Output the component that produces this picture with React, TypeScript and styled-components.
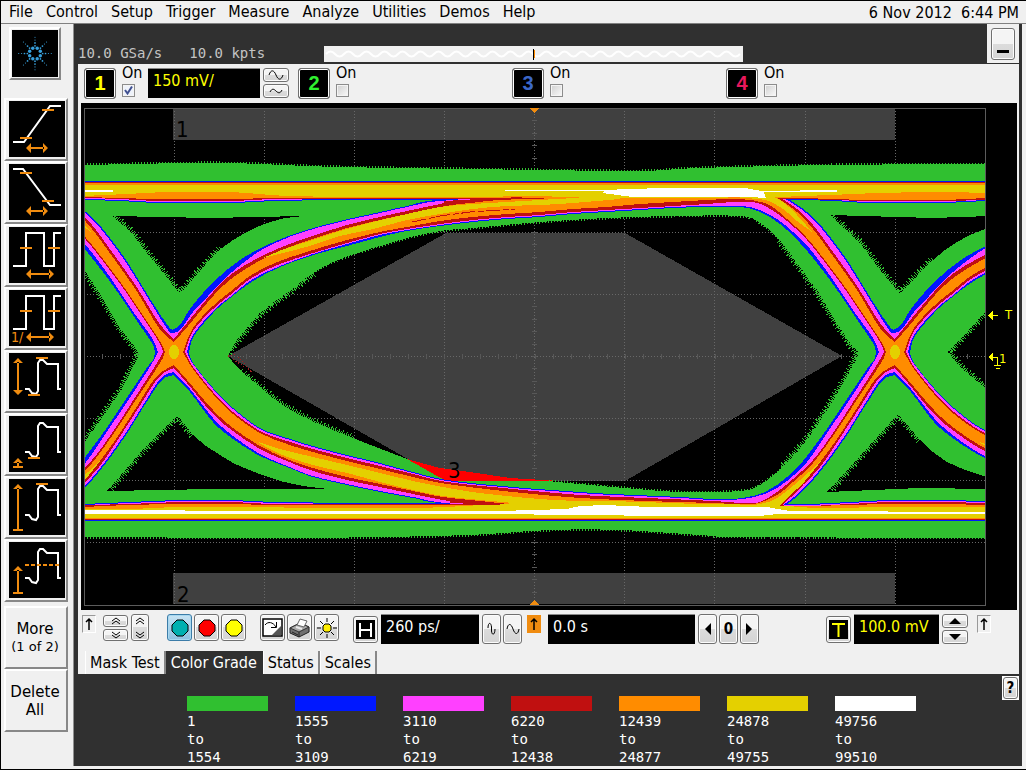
import React from "react";
import styled, { createGlobalStyle, css } from "styled-components";

const ui = `"DejaVu Sans Condensed", "Noto Sans", sans-serif`;
const mono = `"DejaVu Sans Mono", "Liberation Mono", monospace`;

const color = {
  face: "#f0f0f0",
  dark: "#303030",
  edge: "#707070",
  green: "#30c030",
  blue: "#0018ff",
  magenta: "#ff40ff",
  red: "#c01010",
  orange: "#ff8c00",
  yellow: "#e4d000",
  white: "#ffffff",
  mask: "#404040",
  accent: "#f08c10",
};

const GlobalStyle = createGlobalStyle`
  *, *::before, *::after { box-sizing: border-box; }
  body { margin: 0; background: ${color.face}; font-family: ${ui}; font-size: 16px; color: #000; }
  button, input { font: inherit; color: inherit; margin: 0; }
`;

/* ---------- frame ---------- */

const Shell = styled.div`
  min-height: 100vh;
  display: flex;
  flex-direction: column;
  background: ${color.face};
  border: solid #000;
  border-width: 1px 0 1px 1px;
`;

const MenuBar = styled.header`
  display: flex;
  align-items: center;
  justify-content: space-between;
  height: 23px;
  padding: 0 7px 0 8px;
  border-bottom: 1px solid #808080;
  white-space: pre;
`;

const MenuList = styled.nav`
  display: flex;
  gap: 13px;
`;

const MenuItem = styled.button`
  border: 0;
  padding: 0;
  background: none;
  line-height: 22px;
`;

const Body = styled.div`
  flex: 1;
  display: flex;
  align-items: stretch;
  padding-right: 4px;
  padding-bottom: 3px;
`;

const Sidebar = styled.aside`
  width: 73px;
  flex: none;
  display: flex;
  flex-direction: column;
  padding-left: 3px;
  border-right: 1px solid #909090;
`;

const Main = styled.main`
  flex: 1;
  min-width: 0;
  background: ${color.dark};
  padding: 0 3px 0 4px;
`;

/* ---------- side bar ---------- */

const raised = css`
  border: 2px solid;
  border-color: #fff #888 #888 #fff;
  background: ${color.face};
`;

const LogoButton = styled.button`
  ${raised}
  width: 52px;
  height: 53px;
  padding: 1px;
  margin: 3px 0 18px 5px;
  svg { display: block; width: 100%; height: 100%; background: #000; }
`;

const MeasureButton = styled.button`
  ${raised}
  width: 64px;
  height: 63px;
  padding: 0 1px 2px 3px;
  svg { display: block; width: 56px; height: 56px; background: #000; }
`;

const TextButton = styled.button`
  ${raised}
  width: 64px;
  height: 63px;
  padding: 0 2px 0 0;
  font-family: "DejaVu Sans", sans-serif;
  font-size: 15px;
  line-height: 18px;
  small { font-size: 13px; display: block; }
`;

const SideGap = styled.div`
  height: 4px;
`;

/* ---------- header ---------- */

const StatusBar = styled.div`
  display: flex;
  align-items: flex-end;
  height: 40px;
`;

const Rates = styled.div`
  display: flex;
  width: 246px;
  gap: 27px;
  padding-bottom: 2px;
  color: #c4c4c4;
  font-family: ${mono};
  font-size: 14px;
  line-height: 18px;
  white-space: nowrap;
`;

const MemoryBar = styled.div`
  width: 419px;
  height: 16px;
  margin-bottom: 2px;
  background: ${color.face};
  svg { display: block; width: 100%; height: 100%; }
`;

const MinimizeBox = styled.div`
  margin-left: auto;
  width: 32px;
  height: 39px;
  padding: 4px;
  align-self: flex-start;
  background: ${color.face};
`;

const Panel = styled.section`
  background: ${color.face};
`;

/* ---------- controls ---------- */

const Key = styled.button<{ $w: number; $h: number; $on?: boolean }>`
  display: flex;
  align-items: center;
  justify-content: center;
  flex: none;
  width: ${(p) => p.$w}px;
  height: ${(p) => p.$h}px;
  padding: 0;
  border: 1px solid ${(p) => (p.$on ? "#3c7ca8" : color.edge)};
  border-radius: 3px;
  box-shadow: inset 0 0 0 1px ${(p) => (p.$on ? "#a8d8f0" : "#fcfcfc")};
  background: ${(p) =>
    p.$on
      ? "linear-gradient(#c8e4f4, #8cc0e0)"
      : "linear-gradient(#f4f4f4 50%, #dcdcdc 50%, #d4d4d4)"};
  font-size: 15px;
  font-weight: bold;
  svg { display: block; }
`;

const Field = styled.input<{ $w: number; $ink: string }>`
  flex: none;
  width: ${(p) => p.$w}px;
  height: 30px;
  border: 0;
  border-top: 1px solid #888;
  padding: 0 4px 6px 5px;
  background: #000;
  color: ${(p) => p.$ink};
  font-size: 16px;
`;

const Group = styled.div<{ $gap?: number; $before?: number }>`
  display: flex;
  align-items: center;
  gap: ${(p) => p.$gap ?? 2}px;
  margin-left: ${(p) => p.$before ?? 0}px;
`;

const Stack = styled.div`
  display: flex;
  flex-direction: column;
  gap: 2px;
`;

const ArrowTag = styled.button<{ $lit?: boolean; $before?: number }>`
  width: 14px;
  height: 18px;
  padding: 0;
  align-self: flex-start;
  margin-top: 1px;
  margin-left: ${(p) => p.$before ?? 0}px;
  border: ${(p) => (p.$lit ? "0" : "1px solid #999")};
  border-right-color: #fff;
  border-bottom-color: #fff;
  background: ${(p) => (p.$lit ? color.accent : color.face)};
  svg { display: block; margin: auto; }
`;

const Spacer = styled.div`
  flex: 1;
`;

/* ---------- channels ---------- */

const ChannelRow = styled.div`
  display: grid;
  grid-template-columns: repeat(4, minmax(0, 214px));
  height: 39px;
  padding: 4px 6px 0;
`;

const Channel = styled.div`
  display: flex;
  align-items: flex-start;
`;

const ChannelKey = styled.button<{ $ink: string }>`
  width: 32px;
  height: 31px;
  padding: 0;
  border: 1px solid ${color.edge};
  border-radius: 3px;
  box-shadow: inset 0 0 0 1px #fff;
  background: #000;
  color: ${(p) => p.$ink};
  font: bold 20px "Liberation Sans", sans-serif;
`;

const OnSwitch = styled.label`
  display: flex;
  flex-direction: column;
  width: 26px;
  margin-left: 6px;
  margin-top: -4px;
  line-height: 18px;
`;

const Tick = styled.input`
  appearance: none;
  width: 13px;
  height: 13px;
  margin-top: 2px;
  border: 1px solid #8c8c8c;
  box-shadow: inset 0 0 0 1px #f4f4f4;
  background: linear-gradient(135deg, #cfcfcf, #fafafa);
  &:checked {
    background: #eef2fa
      url("data:image/svg+xml,%3Csvg xmlns='http://www.w3.org/2000/svg' viewBox='0 0 11 11'%3E%3Cpath d='M2 5l2.500 3.500L9 1.500' fill='none' stroke='%23405090' stroke-width='2'/%3E%3C/svg%3E");
  }
`;

/* ---------- lower part ---------- */

const PlotFrame = styled.div`
  padding: 0 2px 0 3px;
  svg { display: block; width: 100%; height: auto; background: #000; }
`;

const Toolbar = styled.div`
  display: flex;
  align-items: flex-start;
  height: 41px;
  padding: 4px 28px 0 4px;
`;

const TabList = styled.div`
  display: flex;
  height: 23px;
  padding-left: 7px;
`;

const Tab = styled.button<{ $active?: boolean }>`
  height: 23px;
  padding: 0 4px;
  border: 0;
  border-right: 2px solid ${(p) => (p.$active ? color.dark : "#888")};
  border-left: 1px solid ${(p) => (p.$active ? color.dark : "#fff")};
  background: ${(p) => (p.$active ? color.dark : color.face)};
  color: ${(p) => (p.$active ? "#fff" : "#000")};
  line-height: 22px;
  white-space: nowrap;
`;

const Legend = styled.section`
  display: flex;
  gap: 27px;
  padding: 22px 0 0 109px;
  height: 92px;
`;

const LegendItem = styled.div`
  width: 81px;
  color: #fff;
  font-family: ${mono};
  font-size: 14px;
  line-height: 18px;
`;

const Swatch = styled.div<{ $c: string }>`
  height: 15px;
  margin-bottom: 1px;
  background: ${(p) => p.$c};
`;

const HelpBox = styled.div`
  margin: -20px 0 0 auto;
  height: 24px;
  padding: 1px;
  background: #fff;
`;

/* ---------- eye diagram ---------- */

type Pt = [number, number];

/* Turns "x,y x,y ..." into points. */
const pts = (s: string): Pt[] =>
  s.trim().split(/\s+/).map((p) => p.split(",").map(Number) as Pt);

/* Smooth curve through the points, without the initial move. */
const curve = (p: Pt[]) => {
  let d = "";
  for (let i = 0; i < p.length - 1; i++) {
    const a = p[Math.max(0, i - 1)];
    const b = p[i];
    const c = p[i + 1];
    const e = p[Math.min(p.length - 1, i + 2)];
    d += `C${b[0] + (c[0] - a[0]) / 6} ${b[1] + (c[1] - a[1]) / 6} ${c[0] - (e[0] - b[0]) / 6} ${c[1] - (e[1] - b[1]) / 6} ${c[0]} ${c[1]}`;
  }
  return d;
};

const open = (s: string) => {
  const p = pts(s);
  return `M${p[0]}${curve(p)}`;
};

const straight = (s: string) => `M${pts(s).join("L")}`;

/* Band closed through the two crossing points at its ends. */
const band = (first: string, second: string, ends = true) => {
  const a = pts(first);
  const b = pts(second).reverse();
  return ends
    ? `M174 352L${a[0]}${curve(a)}L895 352L${b[0]}${curve(b)}Z`
    : `M${a[0]}${curve(a)}L${b[0]}${curve(b)}Z`;
};

const PERIOD = 721;

interface Level {
  fill: string;
  periodic: string[];
  rails: string[];
}

const levels: Level[] = [
  {
    fill: color.blue,
    periodic: [
      band(
        "174,329 180,325 190,309 203,293 220,276 240,260 267,245 300,232 340,221 380,212 407,206 437,200 520,197 700,196 775,195 788,199 807,212 823,228 847,260 873,302 890,327 895,329",
        "189,352 194,336 213,313 230,298 253,281 280,267 313,255 347,246 380,237 407,231 440,226 473,222 507,219 540,217 573,214 607,212 640,210 673,208 707,207 740,207 760,212 780,224 800,243 817,263 840,294 860,324 873,343 876,352"
      ),
      band(
        "189,352 193,363 213,388 233,408 260,428 287,438 313,446 347,455 380,463 413,472 447,480 513,487 580,492 613,494 680,497 713,499 743,498 767,491 787,477 803,461 827,429 847,399 867,369 874,360 876,352",
        "174,376 190,392 213,422 233,439 260,456 287,467 313,477 347,485 380,492 413,498 440,503 520,508 700,508 770,508 787,504 807,487 827,463 847,435 867,403 883,380 895,375"
      ),
    ],
    rails: [
      band("84,181 985,181", "84,200 120,201 160,203 230,203 280,201 380,200 760,200 830,201 870,203 940,203 985,201", false),
      band("84,504 130,502 180,500 230,500 280,502 400,503 720,503 800,504 850,502 890,500 940,500 985,501", "84,521 985,521", false),
    ],
  },
  {
    fill: color.magenta,
    periodic: [
      band(
        "174,333 181,329 193,312 208,296 224,279 247,260 267,247 300,233 340,222 380,213 407,207 440,201 520,197 700,196 775,196 787,200 806,213 822,229 846,261 872,303 889,330 895,333",
        "187,352 193,335 213,311 230,297 253,279 280,266 313,254 347,244 380,235 407,230 440,225 473,221 507,218 540,216 573,213 607,211 640,209 673,207 707,206 740,206 757,209 777,219 793,232 810,249 833,280 853,310 873,338 879,352"
      ),
      band(
        "187,352 193,364 213,389 233,409 260,429 287,439 313,447 347,456 380,464 413,473 447,481 513,488 580,493 613,495 680,498 713,500 743,499 767,493 787,481 807,462 827,433 850,399 872,365 879,352",
        "174,372 190,389 213,418 233,436 260,454 287,466 313,476 347,484 380,491 413,497 445,503 520,508 700,508 770,508 786,503 806,486 826,462 846,434 866,402 882,378 895,372"
      ),
    ],
    rails: [
      band("84,182 985,182", "84,199 120,200 160,202 230,202 280,200 380,199 760,199 830,200 870,202 940,202 985,200", false),
      band("84,505 130,503 180,501 230,501 280,503 400,504 720,504 800,505 850,503 890,501 940,501 985,502", "84,520 985,520", false),
    ],
  },
  {
    fill: color.red,
    periodic: [
      band(
        "174,339 187,323 213,292 233,273 260,257 287,245 313,236 347,225 380,217 407,211 440,204 455,201 520,197 700,196 770,196 780,198 797,209 813,225 833,252 857,286 880,323 895,339",
        "185,352 193,331 213,309 230,295 253,277 280,264 313,253 347,243 380,234 407,229 440,224 473,220 507,217 540,215 573,212 607,210 640,208 673,206 707,204 733,202 753,202 767,207 787,221 807,240 827,265 847,292 867,322 880,342 884,352"
      ),
      band(
        "185,352 193,367 213,392 233,412 260,431 287,441 313,449 347,458 380,466 413,474 447,482 513,489 580,495 647,498 713,501 743,503 760,502 777,492 793,479 813,460 833,433 857,396 878,363 884,352",
        "174,368 187,383 213,414 233,431 260,449 287,461 313,471 347,480 380,487 413,494 443,500 470,504 520,508 770,508 783,504 803,485 820,467 840,438 860,407 880,377 895,368"
      ),
    ],
    rails: [
      band("84,182 985,182", "84,198 120,199 160,201 230,201 280,199 380,199 760,199 830,200 870,201 940,201 985,200", false),
      band("84,505 130,504 180,502 230,502 280,504 400,504 720,504 800,506 850,504 890,502 940,502 985,503", "84,520 985,520", false),
    ],
  },
  {
    fill: color.orange,
    periodic: [
      band(
        "174,342 188,326 214,295 235,276 261,260 287,248 313,239 347,228 380,220 407,214 440,207 470,203 525,199 700,196 768,196 777,198 797,212 813,229 833,256 857,290 880,328 895,342",
        "183,352 193,328 213,306 230,292 253,274 280,261 313,250 347,240 380,232 407,227 440,221 473,217 507,214 540,212 573,209 607,207 640,204 673,202 707,200 740,199 767,204 787,219 807,238 827,263 847,290 867,320 882,343 886,352"
      ),
      band(
        "183,352 193,369 213,394 233,414 260,433 287,444 313,452 347,461 380,469 413,477 447,484 513,492 580,498 647,501 713,503 753,504 777,495 793,482 813,463 835,433 858,398 881,363 886,352",
        "174,365 187,380 213,410 233,428 260,446 287,459 313,468 347,477 380,484 413,491 443,497 480,501 510,504 560,507 768,508 780,504 800,484 817,466 837,439 857,408 877,377 895,365"
      ),
    ],
    rails: [
      band("84,183 985,183", "84,197 120,198 160,199 230,199 280,198 380,198 760,198 830,199 870,200 940,200 985,198", false),
      band("84,507 130,505 180,504 230,504 280,505 400,505 720,505 800,506 850,505 890,504 940,504 985,505", "84,519 985,519", false),
    ],
  },
  {
    fill: color.yellow,
    periodic: [
      band(
        "263,258 287,248 313,240 340,231 373,222 407,214 440,207 473,204 507,202 540,200 573,198 620,194",
        "263,258 287,252 313,245 340,236 373,229 407,220 440,214 473,209 507,206 540,205 573,203 620,199",
        false
      ),
      band("740,194 765,194 783,202 797,215 812,232", "740,198 765,200 783,209 797,221 812,232", false),
      band(
        "256,441 280,449 313,457 347,465 380,473 413,481 443,487 480,493 540,499 600,502",
        "256,441 280,454 313,465 347,473 380,482 413,490 443,496 480,500 540,505 600,508",
        false
      ),
      band("740,506 760,504 777,498 800,480 821,461", "740,510 775,507 786,499 805,481 821,461", false),
    ],
    rails: [
      band("84,185 985,185", "84,196 127,194 170,192 230,192 290,196 380,197 480,197 530,196 600,198 660,198 770,197 830,195 880,193 940,192 985,193", false),
      band("84,509 130,509 180,507 250,507 320,508 420,508 520,503 600,501 700,504 770,505 820,508 890,507 985,507", "84,518 985,518", false),
    ],
  },
  {
    fill: color.white,
    periodic: [],
    rails: [
      "M84 190H113V192H84Z",
      "M505 190L600 190L633 189L660 188H745L762 191L837 190V192H764L766 198L750 197H633L602 193L605 191H505Z",
      "M84 510H130L240 511H460L500 511L567 509L580 506L605 505L650 507H767L778 509L790 511L985 512V514H790L778 514L760 516H647L600 515L567 515L500 514H84Z",
    ],
  },
];

const centreHole =
  "228,356 237,340 260,313 287,293 313,273 333,262 357,253 380,246 407,238 440,231 473,228 540,222 607,218 673,216 740,216 760,223 780,240 800,267 817,290 833,317 850,343 858,354 847,377 827,410 807,440 783,467 760,485 740,491 680,492 613,487 547,481";

const sideHoles = [
  "112,216 130,231 150,257 165,275 180,294 200,271 210,259 222,248 233,240 245,233 257,227 270,222 285,218 303,216 210,218 112,216",
  "78,260 84,269 105,302 120,328 137,350 139,355 136,361 122,389 104,415 84,443 78,450",
  "177,415 193,435 206,446 220,455 233,463 247,469 262,475 280,481 303,486 328,489 213,489 107,491 140,453 177,415",
  "830,215 860,243 880,270 900,294 917,276 925,267 933,260 945,250 957,242 970,235 990,227 990,216 933,218 830,215",
  "990,307 967,332 948,352 960,367 990,392",
  "898,414 920,440 933,452 947,462 965,470 990,478 990,489 920,488 827,492 860,456 898,414",
];

/* The central opening follows the mask edge where the trace crosses the mask. */
const maskSide = "L446 481L407 459";
const centreReturn = "407,459 353,438 310,420 280,403 260,387 240,370 228,356";
const outerTop = "84,165 220,163 340,167 540,170 640,171 700,168 830,165 985,164";
const outerBottom = "84,537 280,538 380,537 470,535 550,530 620,530 700,535 745,537 985,538";

const greenArea = [
  band(outerTop, outerBottom, false),
  `${open(centreHole)}${maskSide}${curve(pts(centreReturn))}Z`,
  ...sideHoles.map((h) => `${straight(h)}Z`),
].join("");

const flatFuzz = [outerTop, outerBottom, centreHole].map(open).join("");

/* Steep flanks scatter further than the flat parts. */
const flankFuzz = [
  "114,217 130,231 150,257 165,275 180,294 200,271 222,248",
  "84,269 105,302 120,328 137,350 139,355 136,361 122,389 104,415 84,443",
  "193,435 177,415 140,453 110,488",
  "832,217 860,243 880,270 900,294 917,276 933,260",
  "985,312 967,332 948,352 960,367 985,388",
  "920,440 898,414 860,456 830,490",
  "780,240 800,267 817,290 833,317 850,343 858,354 847,377 827,410 807,440 783,467",
  "228,352 237,340 260,313 287,293 313,273",
  "240,372 260,388 280,404 310,421 353,439",
].map(straight).join("");

const columns = [174, 264, 354, 444, 534, 624, 714, 805, 895];
const rows = [170, 232, 294, 356, 418, 480, 542];

const ticks = (() => {
  let d = "";
  for (let i = 1; i < 50; i++) d += `M${84 + Math.round(i * 18.02)} 354v5`;
  for (let i = 1; i < 40; i++) d += `M532 ${108 + Math.round(i * 12.4)}h5`;
  return d;
})();

const EyeDiagram = () => (
  <svg viewBox="81 103 936 507" role="img" aria-label="Eye diagram with colour grade and mask" shapeRendering="crispEdges">
    <defs>
      <clipPath id="grid-area">
        <rect x="84" y="108" width="901" height="496" />
      </clipPath>
    </defs>
    <g fill={color.mask}>
      <rect x="173" y="108" width="722" height="32" />
      <rect x="173" y="573" width="722" height="31" />
      <path d="M228 356L446 233H625L842 356L625 481H446Z" />
    </g>
    <g stroke="#686868" strokeDasharray="1 2" fill="none">
      {columns.map((x) => <path key={x} d={`M${x}.5 108V604`} />)}
      {rows.map((y) => <path key={y} d={`M84 ${y}.5H985`} />)}
    </g>
    <path d={ticks} stroke="#585858" fill="none" />
    <path d="M407 459L440 468L470 472L510 478L560 481H446Z" fill="#ff0000" />
    <g clipPath="url(#grid-area)">
      <g fill="none" stroke={color.green}>
        <path d={flatFuzz} strokeWidth="3" strokeDasharray="1 2" />
        <path d={flankFuzz} strokeWidth="5" strokeDasharray="1 1" />
        <path d={flankFuzz} strokeWidth="9" strokeDasharray="1 3" />
      </g>
      <path d={greenArea} fill={color.green} fillRule="evenodd" />
      {levels.map((level) => (
        <g key={level.fill} fill={level.fill}>
          {level.rails.map((d, i) => <path key={i} d={d} />)}
          {[-PERIOD, 0, PERIOD].map((shift) => (
            <g key={shift} transform={`translate(${shift} 0)`}>
              {level.periodic.map((d, i) => <path key={i} d={d} />)}
            </g>
          ))}
        </g>
      ))}
      <ellipse cx="174" cy="352" rx="5" ry="7" fill={color.yellow} />
      <ellipse cx="895" cy="352" rx="5" ry="7" fill={color.yellow} />
      <path d="M412 222L440 216L470 212L515 209" stroke={color.red} strokeDasharray="14 3 6 2" fill="none" />
      <path d="M444 202L480 200L522 198" stroke={color.red} strokeWidth="2" fill="none" />
      <path d="M450 502L500 504" stroke={color.red} strokeWidth="2" fill="none" />
    </g>
    <path d="M228 356L236 354L252 372Z" fill="none" stroke="#a02020" strokeDasharray="1 2" />
    <rect x="84" y="108" width="901" height="497" fill="none" stroke="#5c5c5c" />
    <path d="M529 108H540L534.500 113ZM529 605H540L534.500 600Z" fill={color.accent} />
    <g fontFamily="DejaVu Sans Condensed, sans-serif" fontSize="22" fill="#000">
      <text x="176" y="137">1</text>
      <text x="177" y="602">2</text>
      <text x="448" y="478">3</text>
    </g>
    <path d="M988 315.500L993 311V320ZM988 357L993 352V362Z" fill="#ffff00" />
    <path d="M993 315.500H998M993 357.500H997.500V365M994 365.500H1001M996 368.500H1000" fill="none" stroke="#ffff00" />
    <g fontFamily="DejaVu Sans Condensed, sans-serif" fontSize="13" fill="#ffff00">
      <text x="1005" y="319">T</text>
      <text x="999" y="363">1</text>
    </g>
  </svg>
);

/* ---------- icons ---------- */

const Logo = () => {
  const dots: React.ReactNode[] = [];
  for (let k = 0; k < 8; k++) {
    const a = (k * Math.PI) / 4;
    const b = a + Math.PI / 8;
    dots.push(<circle key={`r${k}`} cx={24 + 6 * Math.cos(b)} cy={24 + 6 * Math.sin(b)} r="1.8" />);
    for (let r = 8; r <= 17; r += 3)
      dots.push(<circle key={`${k}-${r}`} cx={24 + r * Math.cos(a)} cy={24 + r * Math.sin(a)} r={r > 12 ? 0.6 : 0.9} />);
  }
  return <svg viewBox="0 0 48 48" fill="#38a0dc" aria-hidden>{dots}</svg>;
};

const hArrow = (x1: number, x2: number, y: number) =>
  `M${x1} ${y}l5 -5v10zM${x2} ${y}l-5 -5v10zM${x1 + 4} ${y - 1}H${x2 - 4}v2H${x1 + 4}z`;
const upArrow = (y1: number, y2: number) =>
  `M9 ${y1}l-5 5h10zM8 ${y1 + 4}h2V${y2}h-2zM4 ${y2 - 1}h10v2h-10z`;

const pulse = "M4 39H17V6H35V39H45V6H52";
const overshoot = "M16 36H20L23 40L27 41L29 38V10L31 7H34L38 11H49V36H52";

interface MeasureIcon {
  name: string;
  trace: string;
  marks: string;
  arrow: string;
  dash?: boolean;
  label?: string;
}

const measures: MeasureIcon[] = [
  { name: "Rise time", trace: "M4 41H15L41 5H52", marks: "M11 37H23M33 9H45", arrow: hArrow(17, 39, 47) },
  { name: "Fall time", trace: "M4 5H14L41 41H52", marks: "M11 9H23M33 37H45", arrow: hArrow(17, 39, 47) },
  { name: "Period", trace: pulse, marks: "M11 21H23M39 21H51", arrow: hArrow(17, 45, 47) },
  { name: "Frequency", trace: pulse, marks: "M11 21H23M39 21H51", arrow: hArrow(17, 45, 47), label: "1/" },
  { name: "V p-p", trace: overshoot, marks: "M27 5H39M19 42H31", arrow: "M9 5l-5 5h10zM8 9h2v29h-2zM9 42l-5 -5h10z" },
  { name: "V min", trace: overshoot, marks: "M19 42H31", arrow: upArrow(42, 51) },
  { name: "V max", trace: overshoot, marks: "M27 5H39", arrow: upArrow(5, 51) },
  { name: "V avg", trace: overshoot, marks: "M16 23H50", dash: true, arrow: upArrow(24, 51) },
];

const MeasureGlyph = ({ m }: { m: MeasureIcon }) => (
  <svg viewBox="0 0 56 56" aria-hidden>
    <path d={m.trace} fill="none" stroke="#fff" strokeWidth="2" />
    <path d={m.marks} stroke={color.accent} strokeWidth="2" strokeDasharray={m.dash ? "4 2" : undefined} />
    <path d={m.arrow} fill={color.accent} />
    {m.label && (
      <text x="2" y="52" fontSize="14" fontFamily="DejaVu Sans Condensed, sans-serif" fill={color.accent}>{m.label}</text>
    )}
  </svg>
);

const Line = ({ w, h, d, sw = 1 }: { w: number; h: number; d: string; sw?: number }) => (
  <svg width={w} height={h} viewBox={`0 0 ${w} ${h}`} fill="none" stroke="#000" strokeWidth={sw} aria-hidden>
    <path d={d} />
  </svg>
);
const Solid = ({ w, h, d }: { w: number; h: number; d: string }) => (
  <svg width={w} height={h} viewBox={`0 0 ${w} ${h}`} aria-hidden><path d={d} /></svg>
);

const chevUp = "M1 4L5 1L9 4M1 7L5 4L9 7";
const chevDown = "M1 1L5 4L9 1M1 4L5 7L9 4";
const ArrowUp = () => <Line w={10} h={14} sw={1.5} d="M5 13V2M2 5L5 2L8 5" />;

const Octagon = ({ c }: { c: string }) => (
  <svg width="18" height="18" viewBox="0 0 18 18" aria-hidden>
    <path d="M6 1H12L17 6V12L12 17H6L1 12V6Z" fill={c} stroke="#000" />
  </svg>
);

const Letter = ({ d, ink }: { d: string; ink: string }) => (
  <svg width="19" height="19" viewBox="0 0 19 19" aria-hidden>
    <rect width="19" height="19" />
    <path d={d} stroke={ink} strokeWidth="2" fill="none" />
  </svg>
);

const ClearGlyph = () => (
  <svg width="21" height="19" viewBox="0 0 21 19" aria-hidden>
    <rect x="1" y="1" width="19" height="17" fill="#fff" stroke="#000" strokeWidth="1.5" />
    <path d="M19 8V17H10Z" fill="#555" />
    <path d="M3 7C6 3 11 4 14 9M14.500 4V9.500H9" fill="none" stroke="#000" />
  </svg>
);

const PrinterGlyph = () => (
  <svg width="21" height="20" viewBox="0 0 21 20" aria-hidden>
    <path d="M1 10L11 5L20 9V14L10 19L1 15Z" fill="#707070" stroke="#222" />
    <path d="M1 10L10 14L20 9L11 5Z" fill="#a8a8a8" stroke="#333" />
    <path d="M10 14V19M3 14L9 17" stroke="#222" />
    <path d="M8 7L11 1L18 3L15 9Z" fill="#fff" stroke="#666" />
    <path d="M7 9L13 11" stroke="#e8e8e8" strokeWidth="2" />
  </svg>
);

const SunGlyph = () => (
  <svg width="20" height="20" viewBox="0 0 20 20" aria-hidden>
    <path d="M10 0V4M10 16V20M0 10H4M16 10H20M3 3L6 6M14 14L17 17M17 3L14 6M3 17L6 14" stroke="#000" />
    <path d="M8 6H12L14 8V12L12 14H8L6 12V8Z" fill="#ffee00" stroke="#000" />
  </svg>
);

const memoryWave = (() => {
  let d = "M2 8";
  for (let x = 2; x < 400; x += 18) d += "q4.500 -5 9 0t9 0";
  return d;
})();

/* ---------- page ---------- */

const menus = ["File", "Control", "Setup", "Trigger", "Measure", "Analyze", "Utilities", "Demos", "Help"];

const channels = [
  { n: "1", ink: "#ffff00", on: true },
  { n: "2", ink: "#30f030", on: false },
  { n: "3", ink: "#3c68c8", on: false },
  { n: "4", ink: "#e8185c", on: false },
];

const grades = [
  { c: color.green, from: "1", to: "1554" },
  { c: color.blue, from: "1555", to: "3109" },
  { c: color.magenta, from: "3110", to: "6219" },
  { c: color.red, from: "6220", to: "12438" },
  { c: color.orange, from: "12439", to: "24877" },
  { c: color.yellow, from: "24878", to: "49755" },
  { c: color.white, from: "49756", to: "99510" },
];

const App = () => (
  <>
    <GlobalStyle />
    <Shell>
      <MenuBar>
        <MenuList>
          {menus.map((m) => <MenuItem key={m}>{m}</MenuItem>)}
        </MenuList>
        <time>{"6 Nov 2012  6:44 PM"}</time>
      </MenuBar>
      <Body>
        <Sidebar>
          <LogoButton aria-label="About"><Logo /></LogoButton>
          {measures.map((m) => (
            <MeasureButton key={m.name} aria-label={m.name}><MeasureGlyph m={m} /></MeasureButton>
          ))}
          <SideGap />
          <TextButton>More<small>(1 of 2)</small></TextButton>
          <TextButton>Delete<br />All</TextButton>
        </Sidebar>
        <Main>
          <StatusBar>
            <Rates><span>10.0 GSa/s</span><span>10.0 kpts</span></Rates>
            <MemoryBar>
              <svg viewBox="0 0 419 16" preserveAspectRatio="none" aria-hidden>
                <path d={memoryWave} fill="none" stroke="#fff" strokeWidth="2" />
                <path d="M209.500 3V14" stroke="#000" />
                <path d="M210.500 4V12" stroke={color.orange} />
              </svg>
            </MemoryBar>
            <MinimizeBox>
              <Key $w={24} $h={32} aria-label="Minimize"><Solid w={12} h={22} d="M0 17h12v3H0z" /></Key>
            </MinimizeBox>
          </StatusBar>
          <Panel>
            <ChannelRow>
              {channels.map((ch) => (
                <Channel key={ch.n}>
                  <ChannelKey $ink={ch.ink}>{ch.n}</ChannelKey>
                  <OnSwitch>On<Tick type="checkbox" defaultChecked={ch.on} /></OnSwitch>
                  {ch.on && (
                    <>
                      <Field $w={112} $ink="#ffff00" defaultValue="150 mV/" aria-label="Vertical scale" />
                      <Group $before={3}>
                        <Stack>
                          <Key $w={26} $h={14} aria-label="Larger"><Line w={16} h={10} d="M1 5C3 -1 6 0 8 5S13 11 15 5" /></Key>
                          <Key $w={26} $h={14} aria-label="Smaller"><Line w={14} h={6} d="M1 4C3 0 5 1 7 3S11 6 13 2" /></Key>
                        </Stack>
                      </Group>
                    </>
                  )}
                </Channel>
              ))}
            </ChannelRow>
            <PlotFrame><EyeDiagram /></PlotFrame>
            <Toolbar>
              <ArrowTag aria-label="Raise"><ArrowUp /></ArrowTag>
              <Group $before={7} $gap={3}>
                <Stack>
                  <Key $w={25} $h={12} aria-label="Up"><Line w={10} h={8} d={chevUp} /></Key>
                  <Key $w={25} $h={12} aria-label="Down"><Line w={10} h={8} d={chevDown} /></Key>
                </Stack>
                <Key $w={18} $h={27} aria-label="Offset"><Line w={10} h={22} d={`${chevUp}M1 15L5 18L9 15M1 18L5 21L9 18`} /></Key>
              </Group>
              <Group $before={18}>
                <Key $w={25} $h={27} $on aria-label="Run"><Octagon c="#00b0b0" /></Key>
                <Key $w={25} $h={27} aria-label="Stop"><Octagon c="#ff0000" /></Key>
                <Key $w={25} $h={27} aria-label="Single"><Octagon c="#ffff00" /></Key>
              </Group>
              <Group $before={14}>
                <Key $w={25} $h={27} aria-label="Clear display"><ClearGlyph /></Key>
                <Key $w={25} $h={27} aria-label="Print"><PrinterGlyph /></Key>
                <Key $w={25} $h={27} aria-label="Intensity"><SunGlyph /></Key>
              </Group>
              <Group $before={14} $gap={3}>
                <Key $w={25} $h={27} aria-label="Horizontal"><Letter d="M4 3V17M15 3V17M4 10H15" ink="#fff" /></Key>
                <Field $w={98} $ink="#fff" defaultValue="260 ps/" aria-label="Time scale" />
              </Group>
              <Group $before={3}>
                <Key $w={19} $h={30} aria-label="Zoom in"><Line w={9} h={14} d="M1 6C1 0 4 0 4.500 5V9C5 14 8 13 8 7" /></Key>
                <Key $w={19} $h={30} aria-label="Zoom out"><Line w={14} h={12} d="M1 6C2 0 5 0 7 6S12 12 13 6" /></Key>
              </Group>
              <ArrowTag $lit $before={5} aria-label="Reference"><ArrowUp /></ArrowTag>
              <Group $before={7} $gap={3}>
                <Field $w={147} $ink="#fff" defaultValue="0.0 s" aria-label="Time position" />
                <Group>
                  <Key $w={19} $h={30} aria-label="Left"><Solid w={7} h={12} d="M7 0V12L1 6Z" /></Key>
                  <Key $w={19} $h={30}>0</Key>
                  <Key $w={19} $h={30} aria-label="Right"><Solid w={7} h={12} d="M0 0V12L6 6Z" /></Key>
                </Group>
              </Group>
              <Spacer />
              <Group $gap={3}>
                <Key $w={25} $h={27} aria-label="Trigger"><Letter d="M3 4H16M9.500 4V17" ink="#ffff00" /></Key>
                <Field $w={85} $ink="#ffff00" defaultValue="100.0 mV" aria-label="Trigger level" />
                <Stack>
                  <Key $w={26} $h={14} aria-label="Level up"><Solid w={12} h={6} d="M0 6H12L6 0Z" /></Key>
                  <Key $w={26} $h={14} aria-label="Level down"><Solid w={12} h={6} d="M0 0H12L6 6Z" /></Key>
                </Stack>
              </Group>
              <ArrowTag $before={9} aria-label="Raise right"><ArrowUp /></ArrowTag>
            </Toolbar>
            <TabList role="tablist">
              <Tab role="tab">Mask Test</Tab>
              <Tab role="tab" $active>Color Grade</Tab>
              <Tab role="tab">Status</Tab>
              <Tab role="tab">Scales</Tab>
            </TabList>
          </Panel>
          <Legend>
            {grades.map((g) => (
              <LegendItem key={g.from}>
                <Swatch $c={g.c} />
                {g.from}<br />to<br />{g.to}
              </LegendItem>
            ))}
            <HelpBox><Key $w={15} $h={22}>?</Key></HelpBox>
          </Legend>
        </Main>
      </Body>
    </Shell>
  </>
);

export default App;
